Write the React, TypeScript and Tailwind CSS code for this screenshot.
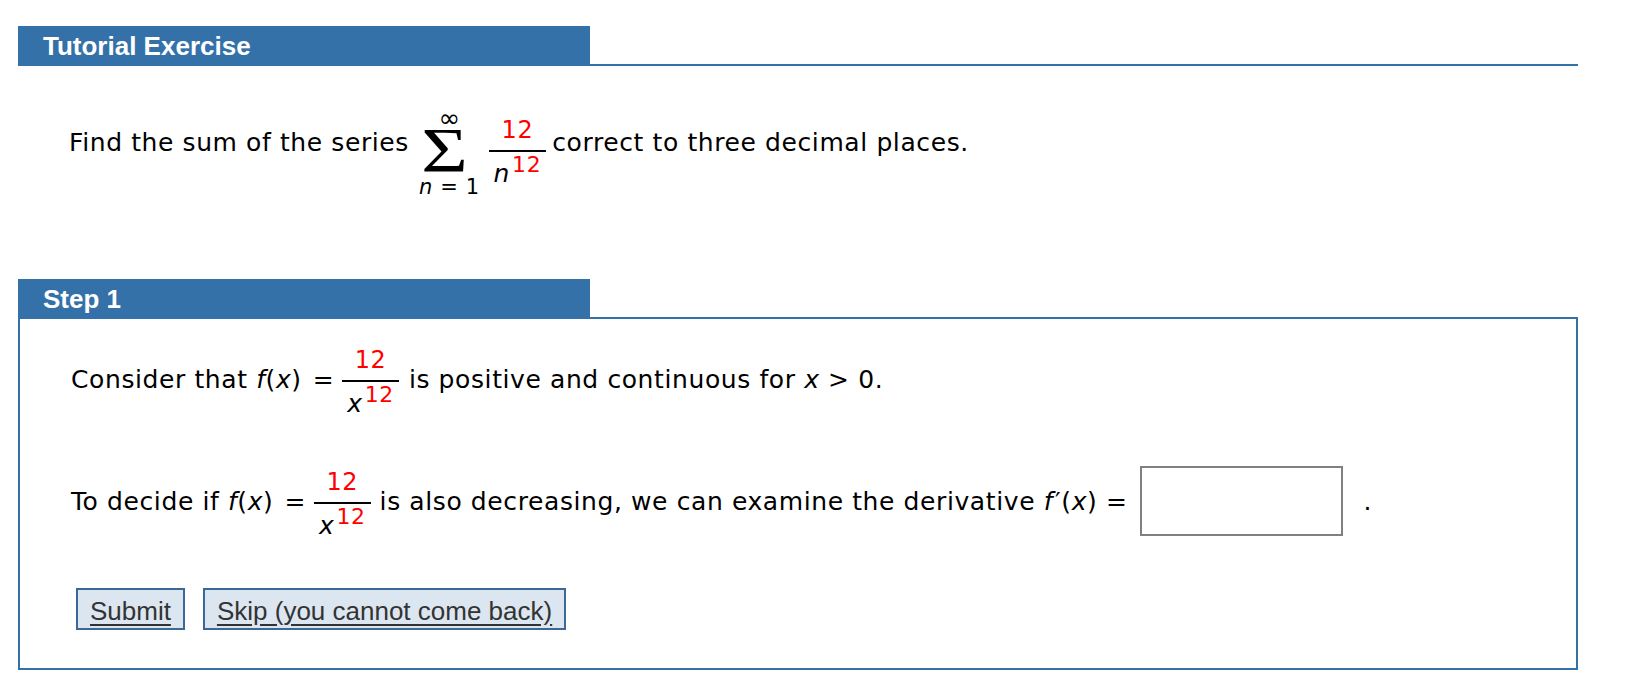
import React from "react";

const blue = "bg-[#3571a9]";

function Header({ title }: { title: string }) {
  return (
    <div className="flex items-end">
      <div className="w-[572px] h-[40px] bg-[#3571a9] pl-[25px] text-white font-bold text-[26px] leading-[40px] tracking-normal font-['Liberation_Sans',Arial,sans-serif]">
        {title}
      </div>
      <div className={`flex-1 h-[2px] ${blue}`} />
    </div>
  );
}

// fraction 12 / v^12, lift = how far the numerator baseline sits above the text baseline
function Frac({ v, lift }: { v: string; lift: string }) {
  return (
    <span className={`inline-flex flex-col items-center ${lift}`}>
      <span className="text-[24px] leading-[24px] pb-[8px] text-[#ff0000]">12</span>
      <span className="h-[2px] w-full bg-black" />
      <span className="pt-[10px] px-[5px] text-[25px] leading-[24px] whitespace-nowrap">
        <i>{v}</i>
        <span className="ml-[2px] align-[10px] text-[22px] leading-[0] text-[#ff0000]">12</span>
      </span>
    </span>
  );
}

function Fx() {
  return (
    <>
      <i>f</i>(<i>x</i>)
    </>
  );
}

export default function App() {
  return (
    <div className="min-h-[700px] bg-white pt-[26px] pl-[18px] text-black tracking-[0.6px] font-['DejaVu_Sans',Verdana,sans-serif]">
      <div className="w-[1560px]">
        <Header title="Tutorial Exercise" />

        <p className="mt-[42px] pl-[51px] text-[25px] leading-[30px] whitespace-nowrap">
          Find the sum of the series
          <span className="inline-block align-[-43px] ml-[10px] text-center">
            <span className="block h-[17px] text-[26px] leading-[20px] tracking-normal">∞</span>
            <span className="block h-[50px] text-[64px] leading-[52px] tracking-normal font-['Liberation_Serif',serif]">
              <span className="inline-block mr-[10px] scale-x-[1.25] font-light">Σ</span>
            </span>
            <span className="block text-[21px] leading-[24px] whitespace-nowrap">
              <i>n</i> = 1
            </span>
          </span>
          <span className="ml-[9px]">
            <Frac v="n" lift="align-[13px]" />
          </span>
          <span className="ml-[6px]">correct to three decimal places.</span>
        </p>

        <div className="mt-[80px]">
          <Header title="Step 1" />
          <div className="border-2 border-t-0 border-[#3571a9] pl-[51px] pt-[29px] pb-[38px]">
            <p className="text-[25px] leading-[30px] whitespace-nowrap">
              Consider that <Fx />
              <span className="ml-[11px]">=</span>
              <span className="ml-[8px]">
                <Frac v="x" lift="align-[20px]" />
              </span>
              <span className="ml-[10px]">
                is positive and continuous for <i>x</i> &gt; 0.
              </span>
            </p>

            <p className="mt-[50px] text-[25px] leading-[30px] whitespace-nowrap">
              To decide if <Fx />
              <span className="ml-[11px]">=</span>
              <span className="ml-[8px]">
                <Frac v="x" lift="align-[20px]" />
              </span>
              <span className="ml-[9px]">
                is also decreasing, we can examine the derivative <i>f</i>
                <span className="ml-[2px]">′</span>(<i>x</i>) =
              </span>
              <input
                type="text"
                className="ml-[12px] w-[203px] h-[70px] border-2 border-[#808080] bg-white px-[4px] text-[25px] outline-none"
              />
              <span className="ml-[21px]">.</span>
            </p>

            <div className="mt-[50px] ml-[5px] flex gap-[18px] tracking-normal font-['Liberation_Sans',Arial,sans-serif] text-[26px] text-[#333333]">
              <button className="h-[42px] border-2 border-[#3b6897] bg-[#dce6f0] px-[12px] pt-[3px] pb-[1px] leading-[36px] underline underline-offset-[4px]">
                Submit
              </button>
              <button className="h-[42px] border-2 border-[#3b6897] bg-[#dce6f0] px-[12px] pt-[3px] pb-[1px] leading-[36px] underline underline-offset-[4px]">
                Skip (you cannot come back)
              </button>
            </div>
          </div>
        </div>
      </div>
    </div>
  );
}
